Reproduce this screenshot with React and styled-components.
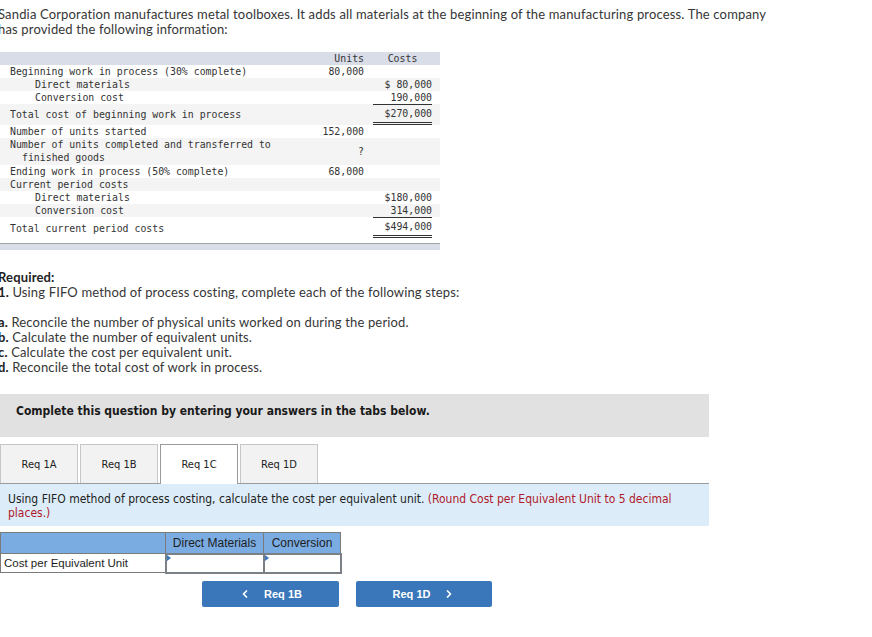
import React from 'react';
import styled, { createGlobalStyle } from 'styled-components';
import { ChevronLeft, ChevronRight } from 'lucide-react';

const Global = createGlobalStyle`
  html, body { margin: 0; padding: 0; background: #fff; }
  body { font-family: Lato, "Open Sans", sans-serif; color: #333; }
  * { box-sizing: border-box; }
`;

const Page = styled.div`
  width: 872px;
  padding-top: 7px;
`;

const Prose = styled.p`
  margin: 0 0 0 -2px;
  width: 780px;
  font-family: Lato, "Open Sans", sans-serif;
  font-size: 13px;
  line-height: 15px;
  letter-spacing: 0.16px;
  color: #363636;
`;

const DataTable = styled.div`
  margin-top: 15px;
  width: 440px;
  font-family: "DejaVu Sans Mono", "Liberation Mono", monospace;
  font-size: 9.85px;
  line-height: 13px;
  color: #333;
`;

const Row = styled.div`
  display: grid;
  grid-template-columns: 1fr 70px 72px;
  background: ${(p) => (p.$head ? '#d9dde8' : p.$shade ? '#f4f4f4' : '#fff')};
  padding-bottom: ${(p) => p.$pb || 0}px;
  white-space: pre;
`;

const Label = styled.div`
  padding-left: ${(p) => 10 + (p.$indent || 0)}px;
  padding-top: ${(p) => p.$pt || 0}px;
`;

const Wrapped = styled.div`
  padding-left: 12px;
`;

const Units = styled.div`
  text-align: right;
  padding-right: 4px;
  align-self: ${(p) => (p.$center ? 'center' : 'start')};
`;

const Costs = styled.div`
  padding: 0 8px 0 5px;
  text-align: ${(p) => (p.$center ? 'center' : 'right')};
`;

const TotalAmount = styled.div`
  border-top: 1px solid #333;
  border-bottom: 3px double #333;
  padding: 2px 0 2px;
`;

const TableFoot = styled.div`
  height: 7px;
  border-top: 1px solid #a3a3a3;
  background: #d9dde8;
`;

const Required = styled.div`
  margin: 20px 0 0 -2px;
  font-family: Lato, "Open Sans", sans-serif;
  font-size: 13px;
  line-height: 15px;
  letter-spacing: 0.15px;
  color: #363636;
`;

const Line = styled.div`
  min-height: 15px;
`;

const Strong = styled.b`
  font-weight: 700;
  color: #222;
`;

const Banner = styled.div`
  margin-top: 19px;
  width: 709px;
  background: #e1e1e1;
  padding: 10px 16px 19px;
  font-family: "DejaVu Sans Condensed", "DejaVu Sans", sans-serif;
  font-stretch: condensed;
  font-weight: 700;
  font-size: 12px;
  line-height: 14px;
  color: #1a1a1a;
`;

const Tabs = styled.div`
  margin-top: 7px;
  width: 709px;
  height: 40px;
  display: flex;
  align-items: flex-start;
  gap: 2px;
  border-bottom: 1px solid #9c9c9c;
`;

const Tab = styled.div`
  width: 78px;
  height: ${(p) => (p.$active ? 40 : 39)}px;
  display: flex;
  align-items: center;
  justify-content: center;
  padding-bottom: ${(p) => (p.$active ? 1 : 0)}px;
  background: ${(p) => (p.$active ? '#fff' : '#f2f2f2')};
  border: 1px solid ${(p) => (p.$active ? '#9a9a9a' : '#c6c6c6')};
  border-bottom: none;
  font-family: "DejaVu Sans Condensed", "DejaVu Sans", sans-serif;
  font-stretch: condensed;
  font-size: 11px;
  color: #222;
`;

const Instruction = styled.div`
  width: 709px;
  background: #dcedf9;
  padding: 8px 8px 6px;
  font-family: "DejaVu Sans Condensed", "DejaVu Sans", sans-serif;
  font-stretch: condensed;
  font-size: 12px;
  line-height: 14px;
  color: #222;
`;

const Red = styled.span`
  color: #b0182b;
`;

const AnswerTable = styled.table`
  margin-top: 6px;
  border-collapse: collapse;
  font-family: "Liberation Sans", Arial, sans-serif;
  color: #1e1e1e;
`;

const HeadCell = styled.th`
  height: 21px;
  width: ${(p) => p.$w}px;
  padding: 0;
  background: #7aace2;
  border: 1px solid #7b7b7b;
  font-weight: 400;
  font-size: 12px;
  text-align: center;
`;

const RowHead = styled.td`
  height: 19px;
  padding: 0 0 0 3px;
  border: 1px solid #7b7b7b;
  font-size: 11.5px;
  text-align: left;
`;

const InputCell = styled.td`
  position: relative;
  padding: 0;
  height: 19px;
  border: 2px solid #7b7f86;
  background: #fff;
  &::before {
    content: '';
    position: absolute;
    left: 0;
    top: 0;
    border-style: solid;
    border-width: 3px 0 3px 4px;
    border-color: transparent transparent transparent #3a77bb;
  }
`;

const Buttons = styled.div`
  margin-top: 7px;
  padding-left: 202px;
  display: flex;
  gap: 17px;
`;

const NavButton = styled.button`
  width: ${(p) => p.$w}px;
  height: 26px;
  display: flex;
  align-items: center;
  justify-content: center;
  gap: 13px;
  border: none;
  border-radius: 2px;
  background: #3a76ba;
  color: #fff;
  font-family: "Liberation Sans", Arial, sans-serif;
  font-weight: 700;
  font-size: 11px;
  padding: 0;
`;

const rows = [
  { label: 'Beginning work in process (30% complete)', units: '80,000' },
  { label: 'Direct materials', indent: 25, cost: '$ 80,000', shade: true },
  { label: 'Conversion cost', indent: 25, cost: '190,000' },
];

export default function App() {
  return (
    <Page>
      <Global />
      <Prose>
        Sandia Corporation manufactures metal toolboxes. It adds all materials at the beginning of the manufacturing process. The company has provided the following information:
      </Prose>

      <DataTable>
        <Row $head>
          <Label />
          <Units>Units</Units>
          <Costs $center>Costs</Costs>
        </Row>
        {rows.map((r) => (
          <Row key={r.label} $shade={r.shade}>
            <Label $indent={r.indent}>{r.label}</Label>
            <Units>{r.units}</Units>
            <Costs>{r.cost}</Costs>
          </Row>
        ))}
        <Row $shade>
          <Label $pt={4}>Total cost of beginning work in process</Label>
          <Units />
          <Costs><TotalAmount>$270,000</TotalAmount></Costs>
        </Row>
        <Row>
          <Label>Number of units started</Label>
          <Units>152,000</Units>
          <Costs />
        </Row>
        <Row $shade $pb={1}>
          <Label>
            <div>Number of units completed and transferred to</div>
            <Wrapped>finished goods</Wrapped>
          </Label>
          <Units $center>?</Units>
          <Costs />
        </Row>
        <Row>
          <Label>Ending work in process (50% complete)</Label>
          <Units>68,000</Units>
          <Costs />
        </Row>
        <Row $shade>
          <Label>Current period costs</Label>
          <Units />
          <Costs />
        </Row>
        <Row>
          <Label $indent={25}>Direct materials</Label>
          <Units />
          <Costs>$180,000</Costs>
        </Row>
        <Row $shade>
          <Label $indent={25}>Conversion cost</Label>
          <Units />
          <Costs>314,000</Costs>
        </Row>
        <Row $pb={5}>
          <Label $pt={5}>Total current period costs</Label>
          <Units />
          <Costs><TotalAmount>$494,000</TotalAmount></Costs>
        </Row>
        <TableFoot />
      </DataTable>

      <Required>
        <Line><Strong>Required:</Strong></Line>
        <Line><Strong>1.</Strong> Using FIFO method of process costing, complete each of the following steps:</Line>
        <Line />
        <Line><Strong>a.</Strong> Reconcile the number of physical units worked on during the period.</Line>
        <Line><Strong>b.</Strong> Calculate the number of equivalent units.</Line>
        <Line><Strong>c.</Strong> Calculate the cost per equivalent unit.</Line>
        <Line><Strong>d.</Strong> Reconcile the total cost of work in process.</Line>
      </Required>

      <Banner>Complete this question by entering your answers in the tabs below.</Banner>

      <Tabs>
        <Tab>Req 1A</Tab>
        <Tab>Req 1B</Tab>
        <Tab $active>Req 1C</Tab>
        <Tab>Req 1D</Tab>
      </Tabs>

      <Instruction>
        Using FIFO method of process costing, calculate the cost per equivalent unit. <Red>(Round Cost per Equivalent Unit to 5 decimal places.)</Red>
      </Instruction>

      <AnswerTable>
        <thead>
          <tr>
            <HeadCell $w={165} />
            <HeadCell $w={98}>Direct Materials</HeadCell>
            <HeadCell $w={77}>Conversion</HeadCell>
          </tr>
        </thead>
        <tbody>
          <tr>
            <RowHead>Cost per Equivalent Unit</RowHead>
            <InputCell />
            <InputCell />
          </tr>
        </tbody>
      </AnswerTable>

      <Buttons>
        <NavButton $w={137}>
          <ChevronLeft size={12} strokeWidth={3.5} />
          <span>Req 1B</span>
        </NavButton>
        <NavButton $w={136}>
          <span>Req 1D</span>
          <ChevronRight size={12} strokeWidth={3.5} />
        </NavButton>
      </Buttons>
    </Page>
  );
}
